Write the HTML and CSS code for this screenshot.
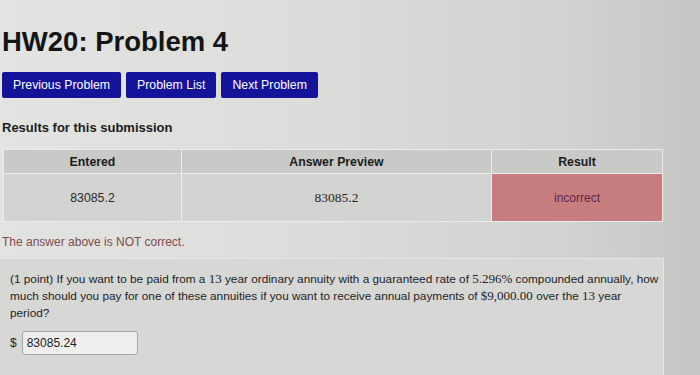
FILE: index.html
```html
<!DOCTYPE html>
<html lang="en">
<head>
<meta charset="utf-8">
<title>HW20: Problem 4</title>
<link rel="stylesheet" href="styles.css">
</head>
<body>
<div class="page">
  <h1 class="title">HW20: Problem 4</h1>
  <div class="nav">
    <a class="btn">Previous Problem</a>
    <a class="btn">Problem List</a>
    <a class="btn">Next Problem</a>
  </div>
  <h2 class="results-title">Results for this submission</h2>
  <table class="results">
    <thead>
      <tr>
        <th class="c1">Entered</th>
        <th class="c2">Answer Preview</th>
        <th class="c3">Result</th>
      </tr>
    </thead>
    <tbody>
      <tr>
        <td class="c1">83085.2</td>
        <td class="c2 math">83085.2</td>
        <td class="c3 bad">incorrect</td>
      </tr>
    </tbody>
  </table>
  <p class="status">The answer above is NOT correct.</p>
  <div class="problem">
    <p class="text">(1 point) If you want to be paid from a <span class="math">13</span> year ordinary annuity with a guaranteed rate of <span class="math">5.296%</span> compounded annually, how much should you pay for one of these annuities if you want to receive annual payments of <span class="math">$9,000.00</span> over the <span class="math">13</span> year period?</p>
    <div class="answer">
      <span class="dollar">$</span>
      <span class="input">83085.24</span>
    </div>
  </div>
</div>
</body>
</html>
```
FILE: styles.css
```css
html, body {
  margin: 0;
  padding: 0;
}
body {
  width: 700px;
  height: 375px;
  overflow: hidden;
  background: linear-gradient(to right, #e3e3e1 0%, #dcdcda 45%, #d2d2d0 80%, #c6c6c4 100%);
  font-family: "Liberation Sans", Arial, sans-serif;
  color: #1a1a1a;
}
.page {
  padding: 0 0 0 2px;
}
.title {
  margin: 0;
  padding-top: 25px;
  font-size: 27.5px;
  line-height: 34px;
  font-weight: bold;
  color: #141414;
}
.nav {
  display: flex;
  gap: 5px;
  margin-top: 13px;
}
.btn {
  display: block;
  background: #14149a;
  color: #ffffff;
  font-size: 12.3px;
  line-height: 26px;
  height: 26px;
  padding: 0 11px;
  border-radius: 2px;
  text-decoration: none;
}
.results-title {
  margin: 21px 0 0 0;
  font-size: 13px;
  line-height: 18px;
  font-weight: bold;
  color: #1c1c1c;
}
.results {
  margin-top: 12px;
  margin-left: 1px;
  width: 660px;
  border-collapse: collapse;
  border: 1px solid #9c9c9a;
  font-size: 12.3px;
}
.results th, .results td {
  border: 1px solid #ececea;
  text-align: center;
  padding: 0;
}
.results th {
  background: #c9c9c7;
  height: 23px;
  font-weight: bold;
  color: #1c1c1c;
}
.results td {
  background: #d3d3d1;
  height: 47px;
  color: #2a2a2a;
}
.results .c1 { width: 178px; }
.results .c2 { width: 311px; }
.results .c3 { width: 171px; }
.results td.bad {
  background: #c77c7e;
  color: #5e2550;
  font-size: 12px;
}
.math {
  font-family: "Liberation Serif", "Times New Roman", serif;
}
.results td.math {
  font-size: 13.5px;
}
.status {
  margin: 12px 0 0 0;
  font-size: 12px;
  line-height: 16px;
  color: #7e4c4c;
}
.problem {
  margin: 8px 0 0 -2px;
  width: 650px;
  height: 104px;
  padding: 12px 3px 0 10px;
  background: #d7d7d5;
  border: 1px solid #e6e6e4;
  border-left: none;
}
.text {
  margin: 0;
  font-size: 11.8px;
  line-height: 17px;
  color: #1e1e1e;
}
.text .math {
  font-size: 13px;
  line-height: 1;
}
.answer {
  display: flex;
  align-items: center;
  gap: 5px;
  margin-top: 9px;
  font-size: 12px;
}
.dollar {
  color: #222;
}
.input {
  display: block;
  width: 110px;
  height: 22px;
  line-height: 22px;
  padding-left: 4px;
  background: #eeeeec;
  border: 1px solid #a5a5a3;
  border-radius: 3px;
  color: #1e1e1e;
}
```
